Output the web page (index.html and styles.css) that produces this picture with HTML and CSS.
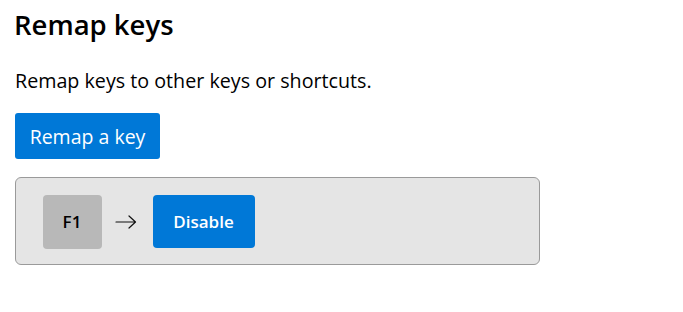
FILE: index.html
```html
<!DOCTYPE html>
<html>
<head>
<meta charset="utf-8">
<link rel="stylesheet" href="styles.css">
</head>
<body>
<main class="page">
  <h1 class="title">Remap keys</h1>
  <p class="desc">Remap keys to other keys or shortcuts.</p>
  <button class="btn-primary">Remap a key</button>
  <section class="card">
    <div class="mapping">
      <span class="key">F1</span>
      <svg class="arrow" width="22" height="14" viewBox="0 0 22 14" aria-hidden="true">
        <path d="M1 7 H20 M14 1 L20.5 7 L14 13" fill="none" stroke="#111" stroke-width="1.2" stroke-linecap="round" stroke-linejoin="round"/>
      </svg>
      <span class="target">Disable</span>
    </div>
  </section>
</main>
</body>
</html>
```
FILE: styles.css
```css
html, body {
  margin: 0;
  padding: 0;
  background: #ffffff;
}
.page {
  font-family: "Segoe UI", "Open Sans", "Noto Sans", sans-serif;
  color: #000;
  padding: 7px 0 0 15px;
  display: flex;
  flex-direction: column;
  align-items: flex-start;
}
.title {
  margin: 0 0 0 -1px;
  font-size: 27.5px;
  font-weight: 600;
  line-height: 36px;
}
.desc {
  margin: 25px 0 0 0;
  font-size: 19.7px;
  line-height: 26px;
}
.btn-primary {
  margin-top: 19px;
  width: 145px;
  height: 46px;
  border: none;
  border-radius: 3px;
  background: #0078d7;
  color: #fff;
  font-family: inherit;
  font-size: 19.5px;
  padding: 0;
}
.card {
  margin-top: 18px;
  width: 523px;
  height: 86px;
  box-sizing: content-box;
  border: 1.5px solid #9a9a9a;
  border-radius: 6px;
  background: #e5e5e5;
}
.mapping {
  display: flex;
  align-items: center;
  padding: 16.5px 0 0 26.5px;
}
.key {
  width: 59px;
  height: 54px;
  border-radius: 4px;
  background: #b8b8b8;
  display: flex;
  align-items: center;
  justify-content: center;
  font-size: 17px;
  font-weight: 600;
}
.arrow {
  margin: 0 16px 0 13px;
}
.target {
  width: 102px;
  height: 53px;
  border-radius: 4px;
  background: #0078d7;
  color: #fff;
  display: flex;
  align-items: center;
  justify-content: center;
  font-size: 17px;
  font-weight: 600;
}
```
